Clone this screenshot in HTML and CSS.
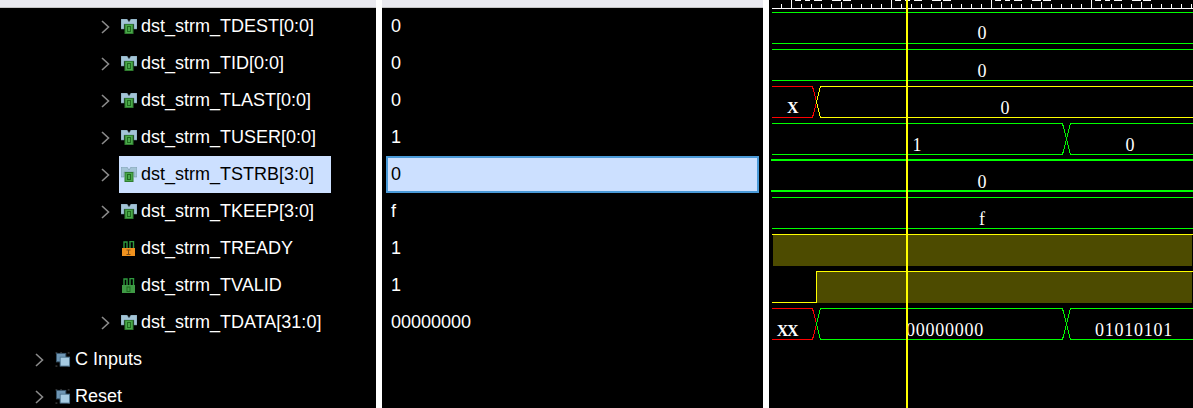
FILE: index.html
```html
<!DOCTYPE html>
<html lang="en">
<head>
<meta charset="UTF-8">
<title>Waveform</title>
<link rel="stylesheet" href="styles.css">
</head>
<body>

<svg class="defs" width="0" height="0">
  <symbol id="chev" viewBox="0 0 10 14">
    <path d="M1 1 L7.5 7 L1 13" fill="none" stroke="#8a8a8a" stroke-width="1.6"/>
  </symbol>
  <symbol id="bus" viewBox="0 0 16 15">
    <path d="M0 0 H6 L8 3 L10 0 H16 V10 H13 V5 H3 V10 H0 Z" fill="#a3c4d6" stroke="#6d8c9c" stroke-width=".5"/>
    <rect x="4" y="5.5" width="8" height="9" fill="#4aa84a" stroke="#2f7d2f"/>
    <rect x="6.5" y="7.5" width="3" height="5" fill="none" stroke="#1f6a1f"/>
  </symbol>
  <symbol id="bit0" viewBox="0 0 14 15">
    <path d="M2 8 V1 H5 V8 M8 8 V0.5 H11.5 V8" fill="none" stroke="#2f9a3f" stroke-width="1.4"/>
    <rect x="0" y="7" width="13" height="8" fill="#3f9a45"/>
    <rect x="5" y="9" width="3" height="4.5" fill="none" stroke="#1f6a1f"/>
  </symbol>
  <symbol id="bit1" viewBox="0 0 14 15">
    <path d="M2 8 V1 H5 V8 M8 8 V0.5 H11.5 V8" fill="none" stroke="#2f9a3f" stroke-width="1.4"/>
    <rect x="0" y="7" width="13" height="8" fill="#f0921e"/>
    <path d="M4.5 9 H8.5 M6.5 9 V13.5 M4.5 13.5 H8.5" fill="none" stroke="#7a4a10"/>
  </symbol>
  <symbol id="group" viewBox="0 0 16 16">
    <path d="M0 1 H2 M5 1 H7 M13 1 H16 M0 15 H2 M13 15 H16" stroke="#5a5a5a" stroke-dasharray="2 1"/>
    <rect x="1" y="1.5" width="10" height="9" fill="#6f97b5" stroke="#39566b"/>
    <rect x="5" y="5.5" width="10" height="9.5" fill="#a6cbe2" stroke="#4f7590"/>
  </symbol>
</svg>

<div class="layout">
  <div class="panel names">
    <div class="panel-head"></div>
    <div class="row depth2"><svg class="chev"><use href="#chev"/></svg><div class="cell"><svg class="ico"><use href="#bus"/></svg><span>dst_strm_TDEST[0:0]</span></div></div>
    <div class="row depth2"><svg class="chev"><use href="#chev"/></svg><div class="cell"><svg class="ico"><use href="#bus"/></svg><span>dst_strm_TID[0:0]</span></div></div>
    <div class="row depth2"><svg class="chev"><use href="#chev"/></svg><div class="cell"><svg class="ico"><use href="#bus"/></svg><span>dst_strm_TLAST[0:0]</span></div></div>
    <div class="row depth2"><svg class="chev"><use href="#chev"/></svg><div class="cell"><svg class="ico"><use href="#bus"/></svg><span>dst_strm_TUSER[0:0]</span></div></div>
    <div class="row depth2"><svg class="chev"><use href="#chev"/></svg><div class="cell selected"><svg class="ico"><use href="#bus"/></svg><span>dst_strm_TSTRB[3:0]</span></div></div>
    <div class="row depth2"><svg class="chev"><use href="#chev"/></svg><div class="cell"><svg class="ico"><use href="#bus"/></svg><span>dst_strm_TKEEP[3:0]</span></div></div>
    <div class="row depth2"><div class="chev"></div><div class="cell"><svg class="ico"><use href="#bit1"/></svg><span>dst_strm_TREADY</span></div></div>
    <div class="row depth2"><div class="chev"></div><div class="cell"><svg class="ico"><use href="#bit0"/></svg><span>dst_strm_TVALID</span></div></div>
    <div class="row depth2"><svg class="chev"><use href="#chev"/></svg><div class="cell"><svg class="ico"><use href="#bus"/></svg><span>dst_strm_TDATA[31:0]</span></div></div>
    <div class="row depth1"><svg class="chev"><use href="#chev"/></svg><div class="cell"><svg class="ico"><use href="#group"/></svg><span>C Inputs</span></div></div>
    <div class="row depth1"><svg class="chev"><use href="#chev"/></svg><div class="cell"><svg class="ico"><use href="#group"/></svg><span>Reset</span></div></div>
  </div>

  <div class="panel values">
    <div class="panel-head"></div>
    <div class="value">0</div>
    <div class="value">0</div>
    <div class="value">0</div>
    <div class="value">1</div>
    <div class="value selected">0</div>
    <div class="value">f</div>
    <div class="value">1</div>
    <div class="value">1</div>
    <div class="value">00000000</div>
  </div>

  <div class="panel waves">
    <svg class="wave-svg" width="424" height="408" viewBox="769 0 424 408">
      <defs>
        <pattern id="ticks" x="771" y="0" width="10" height="8" patternUnits="userSpaceOnUse">
          <rect x="0" y="4" width="1" height="4" fill="#fff"/>
        </pattern>
      </defs>

      <!-- ruler -->
      <g class="crisp">
        <rect x="772" y="4" width="421" height="4" fill="url(#ticks)"/>
        <rect x="772" y="8" width="421" height="1" fill="#fff"/>
        <path class="white" d="M791 0V8 M891 0V8 M991 0V8 M1091 0V8 M841 2V8 M941 2V8 M1041 2V8 M1141 2V8"/>
        <path class="white" d="M795 0.5H801 M805 0.5H810 M814 0.5H822 M832 0.5H841 M843 0.5H851
                               M895 0.5H901 M905 0.5H910 M914 0.5H922 M932 0.5H941 M943 0.5H951
                               M995 0.5H1001 M1005 0.5H1010 M1014 0.5H1022 M1032 0.5H1041 M1043 0.5H1051
                               M1095 0.5H1101 M1105 0.5H1110 M1114 0.5H1122 M1132 0.5H1141 M1143 0.5H1151"/>
      </g>

      <!-- TDEST, TID -->
      <g class="crisp green">
        <path d="M772 12.5H1193 M772 43.5H1193"/>
        <path d="M772 49.5H1193 M772 80.5H1193"/>
      </g>
      <text class="val" x="982" y="39">0</text>
      <text class="val" x="982" y="77">0</text>

      <!-- TLAST -->
      <path class="crisp red" d="M772 86.5H812.5L816.5 102L812.5 117.5H772"/>
      <path class="crisp yellow" d="M1193 86.5H820.5L816.5 102L820.5 117.5H1193"/>
      <text class="val bold" x="792" y="113">X</text>
      <text class="val" x="1005" y="114">0</text>

      <!-- TUSER -->
      <path class="crisp green" d="M772 123.5H1062.5L1070.5 154.5H1193 M772 154.5H1062.5L1070.5 123.5H1193"/>
      <text class="val" x="917" y="151">1</text>
      <text class="val" x="1130" y="151">0</text>

      <!-- TSTRB -->
      <g class="crisp green">
        <rect class="thick" x="771" y="159" width="422" height="2"/>
        <rect class="thick" x="771" y="190" width="422" height="2"/>
      </g>
      <text class="val" x="982" y="188">0</text>

      <!-- TKEEP -->
      <path class="crisp green" d="M772 197.5H1193 M772 228.5H1193"/>
      <text class="val" x="982" y="225">f</text>

      <!-- TREADY -->
      <rect class="crisp olive" x="773" y="235" width="419" height="31"/>
      <path class="crisp yellow" d="M772 234.5H1193"/>

      <!-- TVALID -->
      <rect class="crisp olive" x="817" y="272" width="375" height="31"/>
      <path class="crisp yellow" d="M772 302.5H816.5V271.5H1193"/>

      <!-- TDATA -->
      <path class="crisp red" d="M772 308.5H812.5L816.5 324L812.5 339.5H772"/>
      <path class="crisp green" d="M1062.5 308.5H820.5L816.5 324L820.5 339.5H1062.5L1070.5 308.5H1193 M1062.5 308.5L1070.5 339.5H1193"/>
      <text class="val bold" x="787" y="336">XX</text>
      <text class="val wide" x="945" y="336">00000000</text>
      <text class="val wide" x="1134" y="336">01010101</text>

      <!-- cursor -->
      <rect class="crisp cursor" x="906" y="0" width="2" height="408"/>
    </svg>
  </div>
</div>

</body>
</html>
```
FILE: styles.css
```css
html, body {
  margin: 0;
  padding: 0;
  height: 100%;
  overflow: hidden;
  background-color: #000;
}

.defs {
  position: absolute;
}

.layout {
  display: flex;
  height: 408px;
  background-color: #fff;
  font-family: "Liberation Sans", Arial, sans-serif;
  font-size: 18px;
  color: #fff;
}

.panel {
  background-color: #000;
  overflow: hidden;
}

.names {
  width: 376px;
  margin-right: 6px;
}

.values {
  width: 381px;
  margin-right: 6px;
}

.waves {
  width: 424px;
}

.wave-svg {
  display: block;
}

.panel-head {
  height: 7px;
  background-color: #e9e9ef;
  border-bottom: 1px solid #c4c4c4;
}

/* tree column */
.row {
  display: flex;
  align-items: center;
  height: 37px;
}

.depth2 {
  padding-left: 101px;
}

.depth1 {
  padding-left: 35px;
}

.chev {
  width: 10px;
  height: 14px;
  margin-right: 8px;
  flex: none;
}

.cell {
  display: flex;
  align-items: center;
  height: 37px;
  padding: 0 17px 0 2px;
}

.cell.selected {
  background-color: #cce0ff;
  color: #000;
}

.ico {
  width: 16px;
  height: 15px;
  margin-right: 4px;
  flex: none;
}

/* value column */
.value {
  box-sizing: border-box;
  height: 37px;
  line-height: 33px;
  margin: 0 4px;
  padding-left: 3px;
  border: 2px solid transparent;
}

.value.selected {
  background-color: #cce0ff;
  border-color: #4a9ad8;
  color: #000;
}

/* waveform */
.crisp {
  shape-rendering: crispEdges;
}

.green path, .green {
  fill: none;
  stroke: #00ff00;
  stroke-width: 1;
}

.thick {
  fill: #00ff00;
  stroke: none;
}

.red {
  fill: none;
  stroke: #ff0000;
}

.yellow {
  fill: none;
  stroke: #ffff00;
}

.white {
  fill: none;
  stroke: #fff;
}

.olive {
  fill: #4d4b00;
}

.cursor {
  fill: #ffff00;
}

.val {
  fill: #fff;
  font-family: "Liberation Serif", "Times New Roman", serif;
  font-size: 18px;
  text-anchor: middle;
}

.val.wide {
  letter-spacing: 0.75px;
}

.val.bold {
  font-weight: bold;
  font-size: 16px;
  letter-spacing: -1.4px;
}
```
